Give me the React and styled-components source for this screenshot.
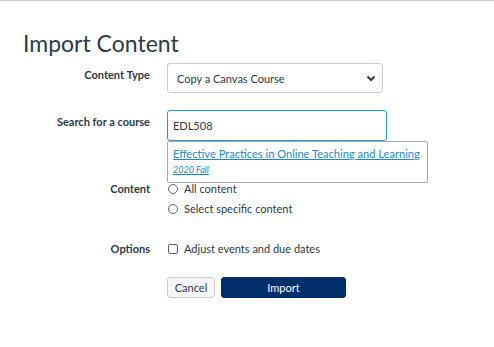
import * as React from 'react'
import styled, { createGlobalStyle } from 'styled-components'

const GlobalStyle = createGlobalStyle`
  html, body {
    margin: 0;
    padding: 0;
    background: #fff;
  }
  body {
    font-family: Lato, 'Liberation Sans', sans-serif;
    color: #2d3b45;
  }
`

const Page = styled.div`
  border-top: 1px solid #c7cdd1;
  padding: 27px 0 0 23px;
  width: 471px;
  height: 319px;
`

const Title = styled.h1`
  margin: 0 0 5px;
  font-size: 23px;
  line-height: 30px;
  font-weight: 400;
  color: #2d3b45;
`

const Form = styled.div`
  display: grid;
  grid-template-columns: 127px 1fr;
  column-gap: 17px;
  align-items: start;
`

const Label = styled.div`
  text-align: right;
  font-size: 11px;
  font-weight: 700;
  line-height: 16px;
  padding-top: ${(props) => props.pt || 0}px;
`

const Field = styled.div`
  position: relative;
  margin-bottom: ${(props) => props.mb || 0}px;
`

const SelectBox = styled.div`
  box-sizing: border-box;
  width: 216px;
  height: 30px;
  border: 1px solid #c7cdd1;
  border-radius: 3px;
  padding: 0 6px 0 9px;
  display: flex;
  align-items: center;
  justify-content: space-between;
  font-size: 11px;
`

const SearchInput = styled.div`
  box-sizing: border-box;
  width: 220px;
  height: 31px;
  border: 1px solid #1a9ae0;
  border-radius: 3px;
  padding: 0 5px;
  display: flex;
  align-items: center;
  font-size: 11px;
  color: #2d3b45;
`

const Suggestions = styled.div`
  position: absolute;
  left: 0;
  top: 31px;
  box-sizing: border-box;
  width: 261px;
  height: 42px;
  background: #fff;
  border: 1px solid #a5acb0;
  border-radius: 2px;
  padding: 3px 5px 0;
  z-index: 2;
`

const CourseLink = styled.a`
  display: block;
  color: #1a8ad8;
  text-decoration: underline;
  font-size: 11.1px;
  line-height: 17px;
  white-space: nowrap;
`

const Term = styled.a`
  display: block;
  color: #1a8ad8;
  text-decoration: underline;
  font-size: 9px;
  font-style: italic;
  line-height: 16px;
`

const ChoiceList = styled.div`
  display: flex;
  flex-direction: column;
  gap: 4px;
`

const Choice = styled.label`
  display: flex;
  align-items: center;
  gap: 6px;
  font-size: 11px;
  line-height: 16px;
`

const Radio = styled.span`
  box-sizing: border-box;
  width: 10px;
  height: 10px;
  margin-left: 1px;
  border: 1px solid #5b6770;
  border-radius: 50%;
`

const Check = styled.span`
  box-sizing: border-box;
  width: 10px;
  height: 10px;
  margin-left: 1px;
  border: 1px solid #5b6770;
  border-radius: 2px;
`

const Buttons = styled.div`
  display: flex;
  gap: 6px;
`

const Button = styled.button`
  box-sizing: border-box;
  height: 21px;
  width: ${(props) => props.w}px;
  padding: 0;
  font-family: Lato, 'Liberation Sans', sans-serif;
  font-size: 11px;
  border-radius: 3px;
  background: ${(props) => props.bg || '#f5f5f5'};
  color: ${(props) => props.color || '#2d3b45'};
  border: 1px solid ${(props) => props.bc || '#c7cdd1'};
`

const Chevron = () => (
  <svg width="10" height="7" viewBox="0 0 10 7">
    <path d="M1.5 1.5 L5 5 L8.5 1.5" fill="none" stroke="#2d3b45" strokeWidth="2" />
  </svg>
)

export default function App() {
  return (
    <>
      <GlobalStyle />
      <Page>
        <Title>Import Content</Title>
        <Form>
          <Label pt={4}>Content Type</Label>
          <Field mb={17}>
            <SelectBox>
              <span>Copy a Canvas Course</span>
              <Chevron />
            </SelectBox>
          </Field>

          <Label pt={4}>Search for a course</Label>
          <Field mb={40}>
            <SearchInput>EDL508</SearchInput>
            <Suggestions>
              <CourseLink>Effective Practices in Online Teaching and Learning</CourseLink>
              <Term>2020 Fall</Term>
            </Suggestions>
          </Field>

          <Label>Content</Label>
          <Field mb={24}>
            <ChoiceList>
              <Choice>
                <Radio />
                All content
              </Choice>
              <Choice>
                <Radio />
                Select specific content
              </Choice>
            </ChoiceList>
          </Field>

          <Label>Options</Label>
          <Field mb={20}>
            <Choice>
              <Check />
              Adjust events and due dates
            </Choice>
          </Field>

          <div />
          <Buttons>
            <Button w={48}>Cancel</Button>
            <Button w={125} bg="#002f6c" bc="#002f6c" color="#fff">
              Import
            </Button>
          </Buttons>
        </Form>
      </Page>
    </>
  )
}
